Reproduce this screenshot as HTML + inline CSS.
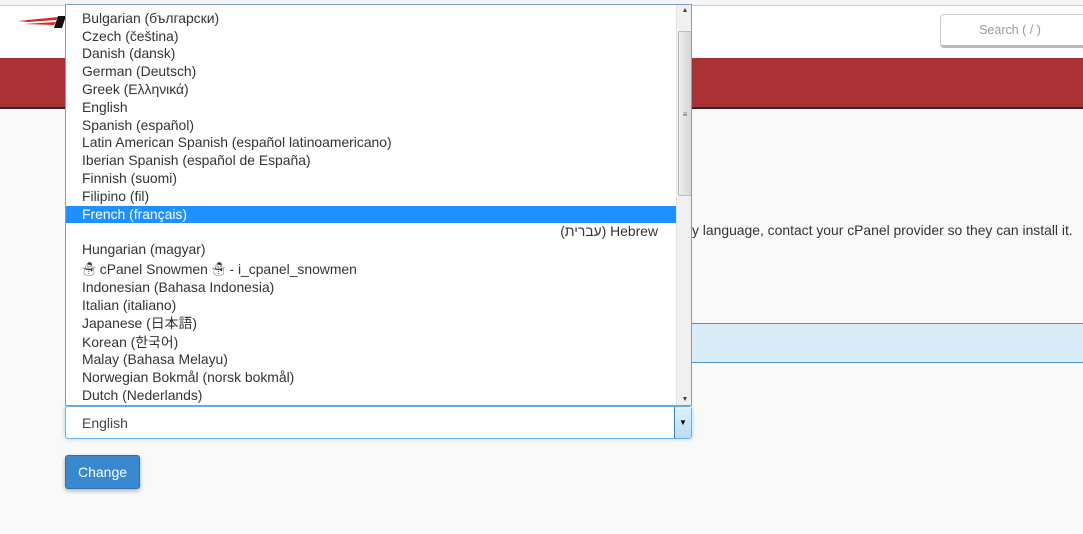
<!DOCTYPE html>
<html><head><meta charset="utf-8"><style>
body{margin:0;width:1083px;height:534px;overflow:hidden;background:#f9f9f9;font-family:"Liberation Sans","Noto Sans CJK JP",sans-serif;position:relative}
.a{position:absolute}
.it{position:absolute;left:16px;font-size:13.9px;color:#333;white-space:nowrap;line-height:17px}
</style></head><body>
<div class="a" style="left:0;top:0;width:1083px;height:5px;background:#f4f5f7;border-bottom:1px solid #ccc"></div>
<div class="a" style="left:0;top:6px;width:1083px;height:52px;background:#fff"></div>
<svg class="a" style="left:18px;top:14px" width="50" height="16"><polygon points="0,7 40,3 38,6 10,8" fill="#d42a2a"/><polygon points="6,10 38,8 36,11" fill="#d42a2a"/><polygon points="40,2 48,2 44,14 36,14" fill="#111"/></svg>
<div class="a" style="left:940px;top:14px;width:150px;height:34px;background:#fff;border:1px solid #ccc;border-bottom:3px solid #bbb;border-radius:4px;box-sizing:border-box;font-size:12.5px;color:#999;text-align:center;line-height:30px;padding-right:10px">Search ( / )</div>
<div class="a" style="left:0;top:58px;width:1083px;height:49px;background:#a83236"></div>
<div class="a" style="left:0;top:107px;width:1083px;height:2px;background:#2a2a2a"></div>
<div class="a" style="left:692px;top:222px;font-size:13.9px;color:#333;white-space:nowrap">y language, contact your cPanel provider so they can install it.</div>
<div class="a" style="left:65px;top:323px;width:1018px;height:38px;background:#d9ecf8;border-top:1px solid #4d94cc;border-bottom:1px solid #4d94cc"></div>
<div class="a" style="left:65px;top:406px;width:627px;height:33px;background:#fff;border:1px solid #66afe9;border-radius:3px;box-sizing:border-box;box-shadow:0 0 4px rgba(102,175,233,.5)"><span style="position:absolute;left:16px;top:8px;font-size:14px;color:#444">English</span><div style="position:absolute;right:0;top:0;width:16px;height:31px;background:linear-gradient(#e0f0fb,#b9dcf5);border-left:1px solid #3c7fb1;font-size:8px;text-align:center;line-height:31px">▼</div></div>
<div class="a" style="left:65px;top:455px;width:75px;height:34px;background:#3a88d0;border:1px solid #2f6fac;border-radius:3px;box-sizing:border-box;color:#fff;font-size:14px;text-align:center;line-height:32px;box-shadow:0 2px 4px rgba(0,0,0,.3)">Change</div>
<div class="a" style="left:65px;top:4px;width:627px;height:402px;background:#fff;border:1px solid #7a9cd3;box-sizing:border-box;overflow:hidden">
<div class="a" style="left:0;top:201px;width:610px;height:17px;background:#1e90ff"></div>
<div class="it" style="top:5px">Bulgarian (български)</div>
<div class="it" style="top:23px">Czech (čeština)</div>
<div class="it" style="top:40px">Danish (dansk)</div>
<div class="it" style="top:58px">German (Deutsch)</div>
<div class="it" style="top:76px">Greek (Ελληνικά)</div>
<div class="it" style="top:94px">English</div>
<div class="it" style="top:112px">Spanish (español)</div>
<div class="it" style="top:129px">Latin American Spanish (español latinoamericano)</div>
<div class="it" style="top:147px">Iberian Spanish (español de España)</div>
<div class="it" style="top:165px">Finnish (suomi)</div>
<div class="it" style="top:183px">Filipino (fil)</div>
<div class="it" style="top:201px;color:#fff">French (français)</div>
<div class="it" style="top:218px;left:auto;right:33px">(עברית) Hebrew</div>
<div class="it" style="top:236px">Hungarian (magyar)</div>
<div class="it" style="top:256px">☃ cPanel Snowmen ☃ - i_cpanel_snowmen</div>
<div class="it" style="top:274px">Indonesian (Bahasa Indonesia)</div>
<div class="it" style="top:292px">Italian (italiano)</div>
<div class="it" style="top:310px">Japanese (日本語)</div>
<div class="it" style="top:329px">Korean (한국어)</div>
<div class="it" style="top:346px">Malay (Bahasa Melayu)</div>
<div class="it" style="top:364px">Norwegian Bokmål (norsk bokmål)</div>
<div class="it" style="top:382px">Dutch (Nederlands)</div>
<div class="a" style="left:610px;top:0;width:16px;height:400px;background:#f0f0f0;border-left:1px solid #e4e4e4">
<div style="position:absolute;top:2px;width:16px;text-align:center;font-size:7px;color:#444">▲</div>
<div style="position:absolute;left:1px;top:26px;width:14px;height:165px;background:linear-gradient(90deg,#eee,#d6d6d6);border:1px solid #bbb;border-radius:2px;box-sizing:border-box;font-size:8px;text-align:center;line-height:165px;color:#666">≡</div>
<div style="position:absolute;bottom:2px;width:16px;text-align:center;font-size:7px;color:#444">▼</div>
</div></div>
</body></html>
